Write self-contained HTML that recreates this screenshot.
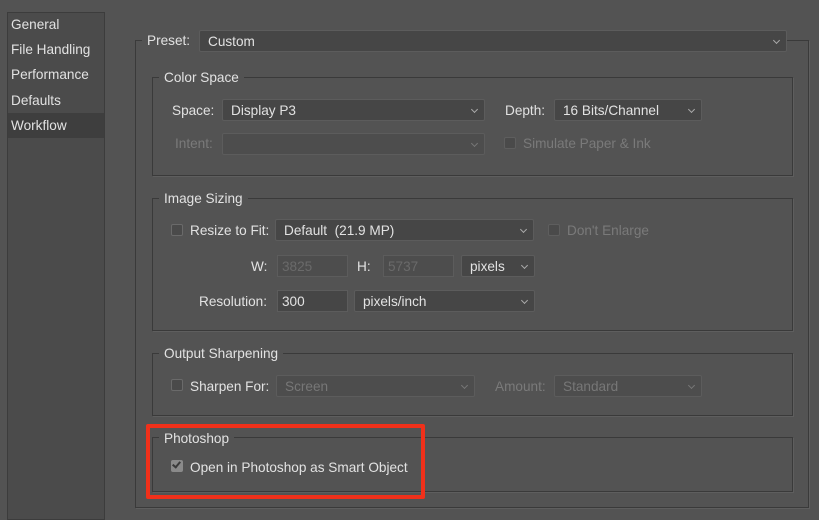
<!DOCTYPE html>
<html><head><style>
html{overflow:hidden;height:520px}
body{margin:0;width:819px;height:520px;background:#535353;font-family:"Liberation Sans",sans-serif;font-size:13.6px;color:#e2e2e2;position:relative;overflow:hidden}
div,span{position:absolute;box-sizing:border-box}
.t{white-space:nowrap;line-height:16px}
.dis{color:#7a7a7a}
.box{border:1px solid #3a3a3a;box-shadow:1px 1px 0 #5e5e5e}
.lg{background:#535353;padding:0 5px;line-height:16px;white-space:nowrap}
.dd{background:#464646;border:1px solid #5c5c5c;border-radius:2px;height:22px;line-height:21px;padding-left:8px;white-space:nowrap}
.dd.d{background:#4d4d4d;color:#777}
.dd:after{content:"";position:absolute;right:7px;top:7px;width:4px;height:4px;border-right:1px solid #aaa;border-bottom:1px solid #aaa;transform:rotate(45deg)}
.dd.d:after{border-color:#777}
.in{background:#464646;border:1px solid #5c5c5c;height:22px;line-height:21px;padding-left:4px}
.in.d{background:#4d4d4d;color:#6a6a6a}
.cb{width:12px;height:12px;border:1px solid #6a6a6a;background:#4a4a4a;border-radius:2px}
</style></head><body>
<div style="left:7px;top:12px;width:98px;height:508px;background:#4b4b4b;border:1px solid #3c3c3c"></div>
<div style="left:8px;top:113px;width:96px;height:25px;background:#3e3e3e"></div>
<div class="t" style="left:11px;top:17px">General</div>
<div class="t" style="left:11px;top:42px">File Handling</div>
<div class="t" style="left:11px;top:67px">Performance</div>
<div class="t" style="left:11px;top:93px">Defaults</div>
<div class="t" style="left:11px;top:118px">Workflow</div>

<div class="box" style="left:135px;top:40px;width:674px;height:468px"></div>
<div class="lg" style="left:142px;top:33px;width:60px;height:18px">Preset:</div>
<div class="dd" style="left:199px;top:30px;width:588px">Custom</div>

<div class="box" style="left:152px;top:77px;width:641px;height:99px"></div>
<div class="lg" style="left:159px;top:70px">Color Space</div>
<div class="t" style="left:172px;top:103px">Space:</div>
<div class="dd" style="left:222px;top:99px;width:263px">Display P3</div>
<div class="t" style="left:505px;top:103px">Depth:</div>
<div class="dd" style="left:554px;top:99px;width:148px">16 Bits/Channel</div>
<div class="t dis" style="left:175px;top:136px">Intent:</div>
<div class="dd d" style="left:222px;top:133px;width:263px"></div>
<div class="cb" style="left:504px;top:137px;border-color:#5e5e5e"></div>
<div class="t dis" style="left:523px;top:136px">Simulate Paper &amp; Ink</div>

<div class="box" style="left:152px;top:198px;width:641px;height:133px"></div>
<div class="lg" style="left:159px;top:191px">Image Sizing</div>
<div class="cb" style="left:171px;top:224px"></div>
<div class="t" style="left:190px;top:223px">Resize to Fit:</div>
<div class="dd" style="left:275px;top:219px;width:259px">Default&nbsp; (21.9 MP)</div>
<div class="cb" style="left:548px;top:224px;border-color:#5e5e5e"></div>
<div class="t dis" style="left:567px;top:223px">Don't Enlarge</div>
<div class="t" style="left:251px;top:259px">W:</div>
<div class="in d" style="left:277px;top:255px;width:71px">3825</div>
<div class="t" style="left:357px;top:259px">H:</div>
<div class="in d" style="left:383px;top:255px;width:71px">5737</div>
<div class="dd" style="left:461px;top:255px;width:74px">pixels</div>
<div class="t" style="left:199px;top:294px">Resolution:</div>
<div class="in" style="left:277px;top:290px;width:71px">300</div>
<div class="dd" style="left:354px;top:290px;width:181px">pixels/inch</div>

<div class="box" style="left:152px;top:353px;width:641px;height:63px"></div>
<div class="lg" style="left:159px;top:346px">Output Sharpening</div>
<div class="cb" style="left:171px;top:379px"></div>
<div class="t" style="left:190px;top:379px">Sharpen For:</div>
<div class="dd d" style="left:276px;top:375px;width:199px">Screen</div>
<div class="t dis" style="left:495px;top:379px">Amount:</div>
<div class="dd d" style="left:554px;top:375px;width:148px">Standard</div>

<div class="box" style="left:152px;top:437px;width:641px;height:55px"></div>
<div class="lg" style="left:159px;top:431px">Photoshop</div>
<div class="cb" style="left:171px;top:460px;background:#8a8a8a;border-color:#8a8a8a"></div>
<span style="left:174px;top:460px;width:5px;height:8px;border-right:2px solid #3a3a3a;border-bottom:2px solid #3a3a3a;transform:rotate(40deg)"></span>
<div class="t" style="left:190px;top:460px">Open in Photoshop as Smart Object</div>
<div style="left:146px;top:424px;width:279px;height:75px;border:4px solid #f0301a;border-radius:2px"></div>
</body></html>
